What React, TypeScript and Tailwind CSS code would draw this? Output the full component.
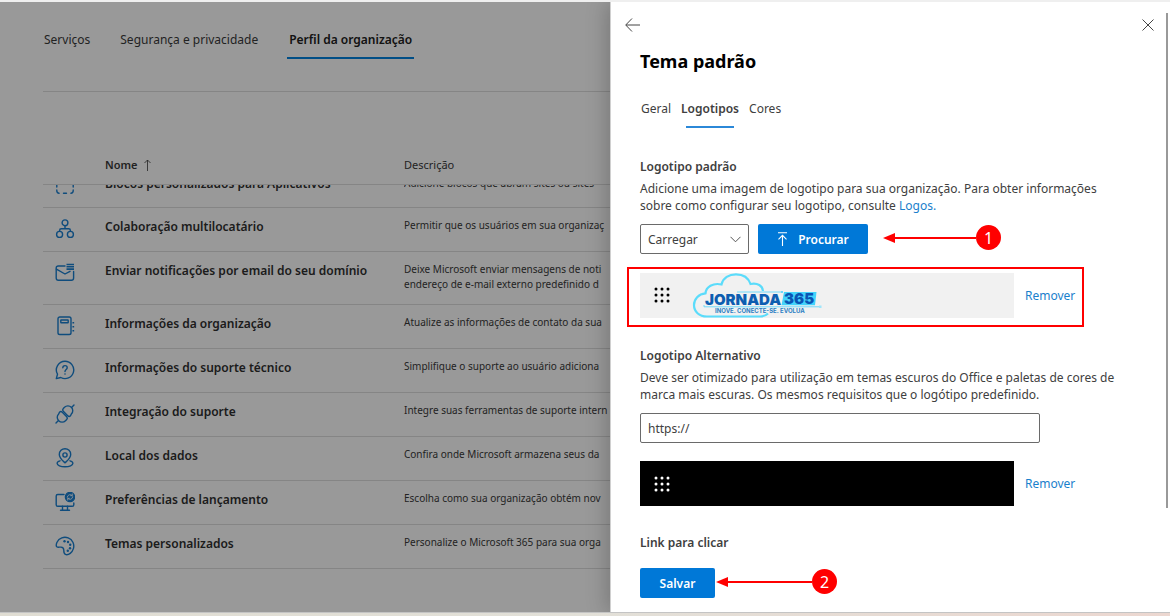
import type { ReactNode } from "react";

const iconProps = {
  width: 20,
  height: 20,
  viewBox: "0 0 20 20",
  fill: "none",
  stroke: "currentColor",
  strokeWidth: 1.4,
  strokeLinecap: "round" as const,
  strokeLinejoin: "round" as const,
  "aria-hidden": true,
};

const OrgIcon = () => (
  <svg {...iconProps}>
    <circle cx="10" cy="3.8" r="2.9" />
    <circle cx="4.6" cy="15.4" r="3" />
    <circle cx="15.4" cy="15.4" r="3" />
    <path d="M10 6.8v3M4.6 12.3v-.8c0-1 .7-1.7 1.7-1.7h7.4c1 0 1.7.7 1.7 1.7v.8" />
  </svg>
);

const MailIcon = () => (
  <svg {...iconProps}>
    <path d="M10 3H3.200C2 3 1.200 3.900 1.200 5v10c0 1.200.900 2.200 2.200 2.200h13c1.300 0 2.200-1 2.200-2.200V8.500" />
    <path d="M1.400 6.200 10 11l5-2.700" />
    <path d="M11.500 1.500h7.500M11.500 3.800h7.500M11.500 6.100h7.500" strokeWidth="1.600" strokeLinecap="butt" />
  </svg>
);

const NotebookIcon = () => (
  <svg {...iconProps}>
    <rect x="3" y="1" width="13" height="17.500" rx="1.800" />
    <rect x="5.800" y="4" width="7.400" height="2.800" rx=".4" />
    <path d="M18.300 6v1.600M18.300 10v1.600M18.300 14v1.600" strokeWidth="1.700" strokeLinecap="butt" />
  </svg>
);

const HelpIcon = () => (
  <svg {...iconProps}>
    <path d="M10 1.200a8.700 8.700 0 1 1-4.200 16.300L1.300 18.600l1.200-4.400A8.700 8.700 0 0 1 10 1.200Z" />
    <path d="M7.800 7.800c0-1.400 1-2.200 2.200-2.200 1.300 0 2.200.9 2.200 2.100 0 1.700-2.200 1.800-2.200 3.800" />
    <circle cx="10" cy="14" r=".8" fill="currentColor" stroke="none" />
  </svg>
);

const PlugIcon = () => (
  <svg {...iconProps}>
    <path d="M1 19l2.200-2.200M16.800 3.200 19 1" />
    <path d="M4.500 8.300a2 2 0 0 1 2.800 0l4.400 4.400a2 2 0 0 1 0 2.800l-1.200 1.200a4.700 4.700 0 0 1-6.800 0 4.700 4.700 0 0 1 0-6.800Z" />
    <path d="M15.500 11.700a2 2 0 0 1-2.800 0L8.300 7.300a2 2 0 0 1 0-2.800l1.200-1.200a4.700 4.700 0 0 1 6.800 0 4.700 4.700 0 0 1 0 6.800Z" />
  </svg>
);

const PinIcon = () => (
  <svg {...iconProps}>
    <path d="M10 14.800c-1.800-1.700-5.700-4.700-5.700-8.400a5.700 5.700 0 0 1 11.400 0c0 3.700-3.900 6.700-5.700 8.400Z" />
    <circle cx="10" cy="7" r="2.100" />
    <path d="M5 12.800c-1.700.5-2.900 1.300-2.900 2.500 0 2 3.500 3.500 7.900 3.500s7.900-1.500 7.900-3.500c0-1.200-1.200-2-2.900-2.500" />
  </svg>
);

const MonitorIcon = () => (
  <svg {...iconProps}>
    <path d="M9 2.500H2.800c-.9 0-1.600.7-1.600 1.600v8.600c0 .9.7 1.600 1.600 1.600h14.400c.9 0 1.600-.7 1.600-1.600V11" />
    <path d="M7.500 14.300v3.500M12.500 14.300v3.500M5.500 18.300h9" />
    <circle cx="15" cy="5" r="4.600" fill="currentColor" />
    <path d="M12.300 5.200a2.800 2.800 0 0 1 4.800-1.700M17.700 4.800a2.800 2.800 0 0 1-4.800 1.700M17.300 2v1.700h-1.700M12.700 8V6.300h1.700" stroke="#fff" strokeWidth=".8" />
  </svg>
);

const PaletteIcon = () => (
  <svg {...iconProps}>
    <path d="M2 6.200C4 2 9 .3 13.200 1.900c4.300 1.700 6.500 6.300 5.200 10.700-1.200 4.100-4.800 6.500-7.400 6-2.500-.5-2.200-2.900-2.200-4.400 0-2-1-3-2.800-3.100-1.700-.1-3.100.6-4.200-.4C.8 9.700 1.300 7.800 2 6.200Z" />
    <g fill="currentColor" stroke="none">
      <circle cx="9.500" cy="5.200" r="1.200" />
      <circle cx="13" cy="6" r="1.200" />
      <circle cx="15.200" cy="8.800" r="1.200" />
      <circle cx="15" cy="12.200" r="1.200" />
      <circle cx="12.800" cy="14.700" r="1.200" />
    </g>
  </svg>
);

const DashedIcon = () => (
  <svg {...iconProps}>
    <path d="M1.800 7V5c0-1.700 1-3 3-3M15 2c2 0 3 1.300 3 3v2M18.200 10v2M1.800 10v2M1.800 15v.8c0 1.400.8 2.400 2.300 2.400M8.500 18.300h3M18.200 15v.8c0 1.400-.8 2.400-2.300 2.400" />
  </svg>
);

type Row = { icon: ReactNode; name: string; lines: string[] };

const rows: Row[] = [
  { icon: <OrgIcon />, name: "Colaboração multilocatário", lines: ["Permitir que os usuários em sua organizaç"] },
  {
    icon: <MailIcon />,
    name: "Enviar notificações por email do seu domínio",
    lines: ["Deixe Microsoft enviar mensagens de noti", "endereço de e-mail externo predefinido d"],
  },
  { icon: <NotebookIcon />, name: "Informações da organização", lines: ["Atualize as informações de contato da sua"] },
  { icon: <HelpIcon />, name: "Informações do suporte técnico", lines: ["Simplifique o suporte ao usuário adiciona"] },
  { icon: <PlugIcon />, name: "Integração do suporte", lines: ["Integre suas ferramentas de suporte intern"] },
  { icon: <PinIcon />, name: "Local dos dados", lines: ["Confira onde Microsoft armazena seus da"] },
  { icon: <MonitorIcon />, name: "Preferências de lançamento", lines: ["Escolha como sua organização obtém nov"] },
  { icon: <PaletteIcon />, name: "Temas personalizados", lines: ["Personalize o Microsoft 365 para sua orga"] },
];

function SettingsPage() {
  return (
    <main className="col-start-1 row-start-1 min-w-0 overflow-hidden bg-white pl-[43px] text-[#3a3a3a]">
      <nav className="flex h-[90px] items-start gap-7 border-b border-[#dedede] pt-[25px] text-[12px] leading-[26px]">
        <a href="#servicos" className="px-px">Serviços</a>
        <a href="#seguranca" className="px-px">Segurança e privacidade</a>
        <a href="#perfil" className="border-b-2 border-[#0082e0] px-0.5 pb-1 font-semibold text-[#202020]">
          Perfil da organização
        </a>
      </nav>
      <table className="mt-[60px] w-full table-fixed text-left">
        <colgroup>
          <col className="w-[62px]" />
          <col className="w-[299px]" />
          <col />
        </colgroup>
        <thead>
          <tr className="h-8 border-b border-[#dedede] align-top text-[11px] leading-[26px]">
            <th aria-label="Ícone" />
            <th className="font-semibold">
              <span className="flex items-center gap-1.5">
                Nome
                <svg width="7" height="12" viewBox="0 0 7 12" fill="none" stroke="currentColor" strokeWidth=".8" aria-hidden="true">
                  <path d="M3.500 12V1M.5 4l3-3 3 3" />
                </svg>
              </span>
            </th>
            <th className="font-normal">Descrição</th>
          </tr>
        </thead>
        <tbody className="whitespace-nowrap">
          <tr className="border-b border-[#dedede] align-top">
            <td>
              <div className="flex h-[22px] items-end overflow-hidden pb-3 pl-3 text-[#1a7fd0]">
                <DashedIcon />
              </div>
            </td>
            <td>
              <div className="flex h-[22px] items-end overflow-hidden pb-3.5 text-[12px] leading-[18px] font-semibold text-[#303030]">
                Blocos personalizados para Aplicativos
              </div>
            </td>
            <td>
              <div className="flex h-[22px] items-end overflow-hidden pb-4 text-[10px] leading-[15px]">
                Adicione blocos que abram sites ou sites
              </div>
            </td>
          </tr>
          {rows.map((row) => (
            <tr key={row.name} className="h-11 border-b border-[#dedede] align-top">
              <td className="pt-[11px] pl-3 text-[#1a7fd0]">{row.icon}</td>
              <td className="pt-2.5 text-[12px] leading-[18px] font-semibold text-[#303030]">{row.name}</td>
              <td className="pt-2.5 pb-3 text-[10px] leading-[15px]">
                {row.lines.map((line) => (
                  <div key={line}>{line}</div>
                ))}
              </td>
            </tr>
          ))}
        </tbody>
      </table>
    </main>
  );
}

function GridDots({ className }: { className: string }) {
  return (
    <svg className={className} width="16" height="16" viewBox="0 0 16 16" fill="currentColor" aria-hidden="true">
      {[2, 8, 14].flatMap((y) => [2, 8, 14].map((x) => <circle key={`${x}-${y}`} cx={x} cy={y} r="1.500" />))}
    </svg>
  );
}

function JornadaLogo() {
  return (
    <svg width="132" height="45" viewBox="690 273 132 45" fill="none" role="img" aria-label="Jornada 365">
      <path
        d="M768 313.500c-2 2-4 3-8 3h-53c-8 0-13-5-13-11.500 0-6 4.500-11 11.500-11.700C706 287 713 282.500 721.500 284.500 723 278 729 274.300 736 274.300c7 0 12.500 3.700 14.500 9.700 7-1.500 12.200 1.800 12.500 7"
        stroke="#5bdcfb"
        strokeWidth="2.200"
      />
      <path d="M737 292h45M704 305v1.800h116" stroke="#6fd9fa" strokeWidth="1" />
      <rect x="781" y="291" width="2" height="2" fill="#6fd9fa" />
      <rect x="819" y="305.500" width="2.500" height="2.500" fill="#9fe6fb" />
      <path d="M784 292h32.500l-1.500 13.300h-33.500Z" fill="#43d3fb" />
      <text x="705" y="304.500" fontFamily="Inter, sans-serif" fontWeight="900" fontSize="15" fill="#0d5db0">JORNADA</text>
      <text x="784" y="304" fontFamily="Inter, sans-serif" fontWeight="900" fontSize="15" fill="#0a55b4">365</text>
      <text x="715" y="313.300" fontFamily="Inter, sans-serif" fontWeight="700" fontSize="6" fill="#2b7fc4">INOVE. CONECTE-SE. EVOLUA</text>
    </svg>
  );
}

function Callout({ step, className }: { step: number; className: string }) {
  return (
    <div className={`pointer-events-none absolute flex items-center ${className}`}>
      <svg width="12" height="10" viewBox="0 0 12 10" aria-hidden="true">
        <path d="M0 5 12 0v10Z" fill="#f00" />
      </svg>
      <span className="h-0.5 flex-1 bg-[#ff0000]" />
      <span className="flex size-[25px] items-center justify-center rounded-full bg-[#ff0000] text-base leading-none text-white">
        {step}
      </span>
    </div>
  );
}

function ThemePanel() {
  return (
    <aside
      role="dialog"
      aria-labelledby="panel-title"
      className="relative col-start-1 row-start-1 w-[560px] max-w-full justify-self-end border-l border-[#d0d0d0] bg-white pr-8 pb-3.5 pl-[29px] text-[12px] leading-[17px] text-[#404040] shadow-[-3px_0_20px_rgba(0,0,0,0.22)]"
    >
      <div className="-mr-[20px] -ml-[17px] flex items-center justify-between pt-[13px]">
        <button type="button" aria-label="Voltar" className="p-0.5">
          <svg width="15" height="14" viewBox="0 0 15 14" fill="none" stroke="#444" aria-hidden="true">
            <path d="M15 7H1M7 .5.700 7 7 13.500" />
          </svg>
        </button>
        <button type="button" aria-label="Fechar" className="p-1">
          <svg width="12" height="12" viewBox="0 0 12 12" fill="none" stroke="#444" aria-hidden="true">
            <path d="m.5.500 11 11M11.500.500l-11 11" />
          </svg>
        </button>
      </div>

      <h1 id="panel-title" className="mt-3.5 text-lg leading-6 font-bold text-black">Tema padrão</h1>

      <div role="tablist" className="mt-[27px] flex items-start gap-2.5 pl-px leading-[18px]">
        <button type="button" role="tab" aria-selected="false">Geral</button>
        <button type="button" role="tab" aria-selected="true" className="flex flex-col items-center gap-2 font-semibold">
          Logotipos
          <span className="h-0.5 w-12 bg-[#2b88d8]" />
        </button>
        <button type="button" role="tab" aria-selected="false">Cores</button>
      </div>

      <h2 className="mt-[30px] font-semibold">Logotipo padrão</h2>
      <p className="mt-[5px]">
        Adicione uma imagem de logotipo para sua organização. Para obter informações
        <br />
        sobre como configurar seu logotipo, consulte{" "}
        <a href="#logos" className="text-[#1a80cc]">Logos.</a>
      </p>

      <div className="relative mt-2.5 flex gap-[9px]">
        <div className="relative w-[109px]">
          <select
            aria-label="Origem do logotipo"
            className="h-[30px] w-full appearance-none rounded-xs border border-[#6a6a6a] bg-white pl-[7px]"
          >
            <option>Carregar</option>
          </select>
          <svg className="pointer-events-none absolute top-3 right-2" width="11" height="7" viewBox="0 0 11 7" fill="none" stroke="#555" aria-hidden="true">
            <path d="m.5.800 5 5 5-5" />
          </svg>
        </div>
        <button
          type="button"
          className="flex h-[30px] w-[110px] items-center justify-center gap-2.5 rounded-xs bg-[#0078d7] font-semibold text-white"
        >
          <svg width="11" height="14" viewBox="0 0 11 14" fill="none" stroke="currentColor" strokeWidth="1.100" aria-hidden="true">
            <path d="M1 .700h9M5.500 14V3.500M1.500 7.300l4-4 4 4" />
          </svg>
          Procurar
        </button>
        <Callout step={1} className="top-px left-[243px] w-[118px]" />
      </div>

      <div className="mt-[13px] -ml-[13px] flex h-[60px] w-[457px] items-center border-2 border-[#ff0000] pb-1 pl-[11px]">
        <div className="flex h-[45px] w-[374px] items-center bg-[#f1f1f1] pl-3.5">
          <GridDots className="mr-5 text-black" />
          <JornadaLogo />
        </div>
        <button type="button" className="ml-[11px] text-[#1a80cc]">Remover</button>
      </div>

      <h2 className="mt-5 font-semibold">Logotipo Alternativo</h2>
      <p className="mt-[5px]">
        Deve ser otimizado para utilização em temas escuros do Office e paletas de cores de
        <br />
        marca mais escuras. Os mesmos requisitos que o logótipo predefinido.
      </p>
      <input
        type="text"
        aria-label="URL do logotipo alternativo"
        defaultValue="https://"
        className="mt-2.5 block h-[30px] w-[400px] rounded-xs border border-[#6a6a6a] px-[7px]"
      />
      <div className="mt-[18px] flex items-center">
        <div className="flex h-[45px] w-[374px] items-center bg-black pl-3.5">
          <GridDots className="text-white" />
        </div>
        <button type="button" className="ml-[11px] text-[#1a80cc]">Remover</button>
      </div>

      <h2 className="mt-7 font-semibold">Link para clicar</h2>
      <div className="relative mt-[17px] flex">
        <button type="button" className="h-[30px] w-[75px] rounded-xs bg-[#0078d7] font-semibold text-white">
          Salvar
        </button>
        <Callout step={2} className="top-px left-[76px] w-[121px]" />
      </div>

      <div className="absolute top-[11px] right-0.5 h-[495px] w-0.5 bg-[#999]" />
    </aside>
  );
}

export default function App() {
  return (
    <div className="flex min-h-screen flex-col font-['Noto_Sans','Open_Sans',sans-serif]">
      <div className="h-0.5 bg-[#efefef]" />
      <div className="grid flex-1 grid-cols-1 overflow-hidden">
        <SettingsPage />
        <div className="col-start-1 row-start-1 bg-black/40" />
        <ThemePanel />
      </div>
      <div className="h-1 border-t border-[#c4c4c4] bg-linear-to-r from-[#e0ddd3] via-[#e2e0d8] to-[#ecd7d0]" />
    </div>
  );
}
